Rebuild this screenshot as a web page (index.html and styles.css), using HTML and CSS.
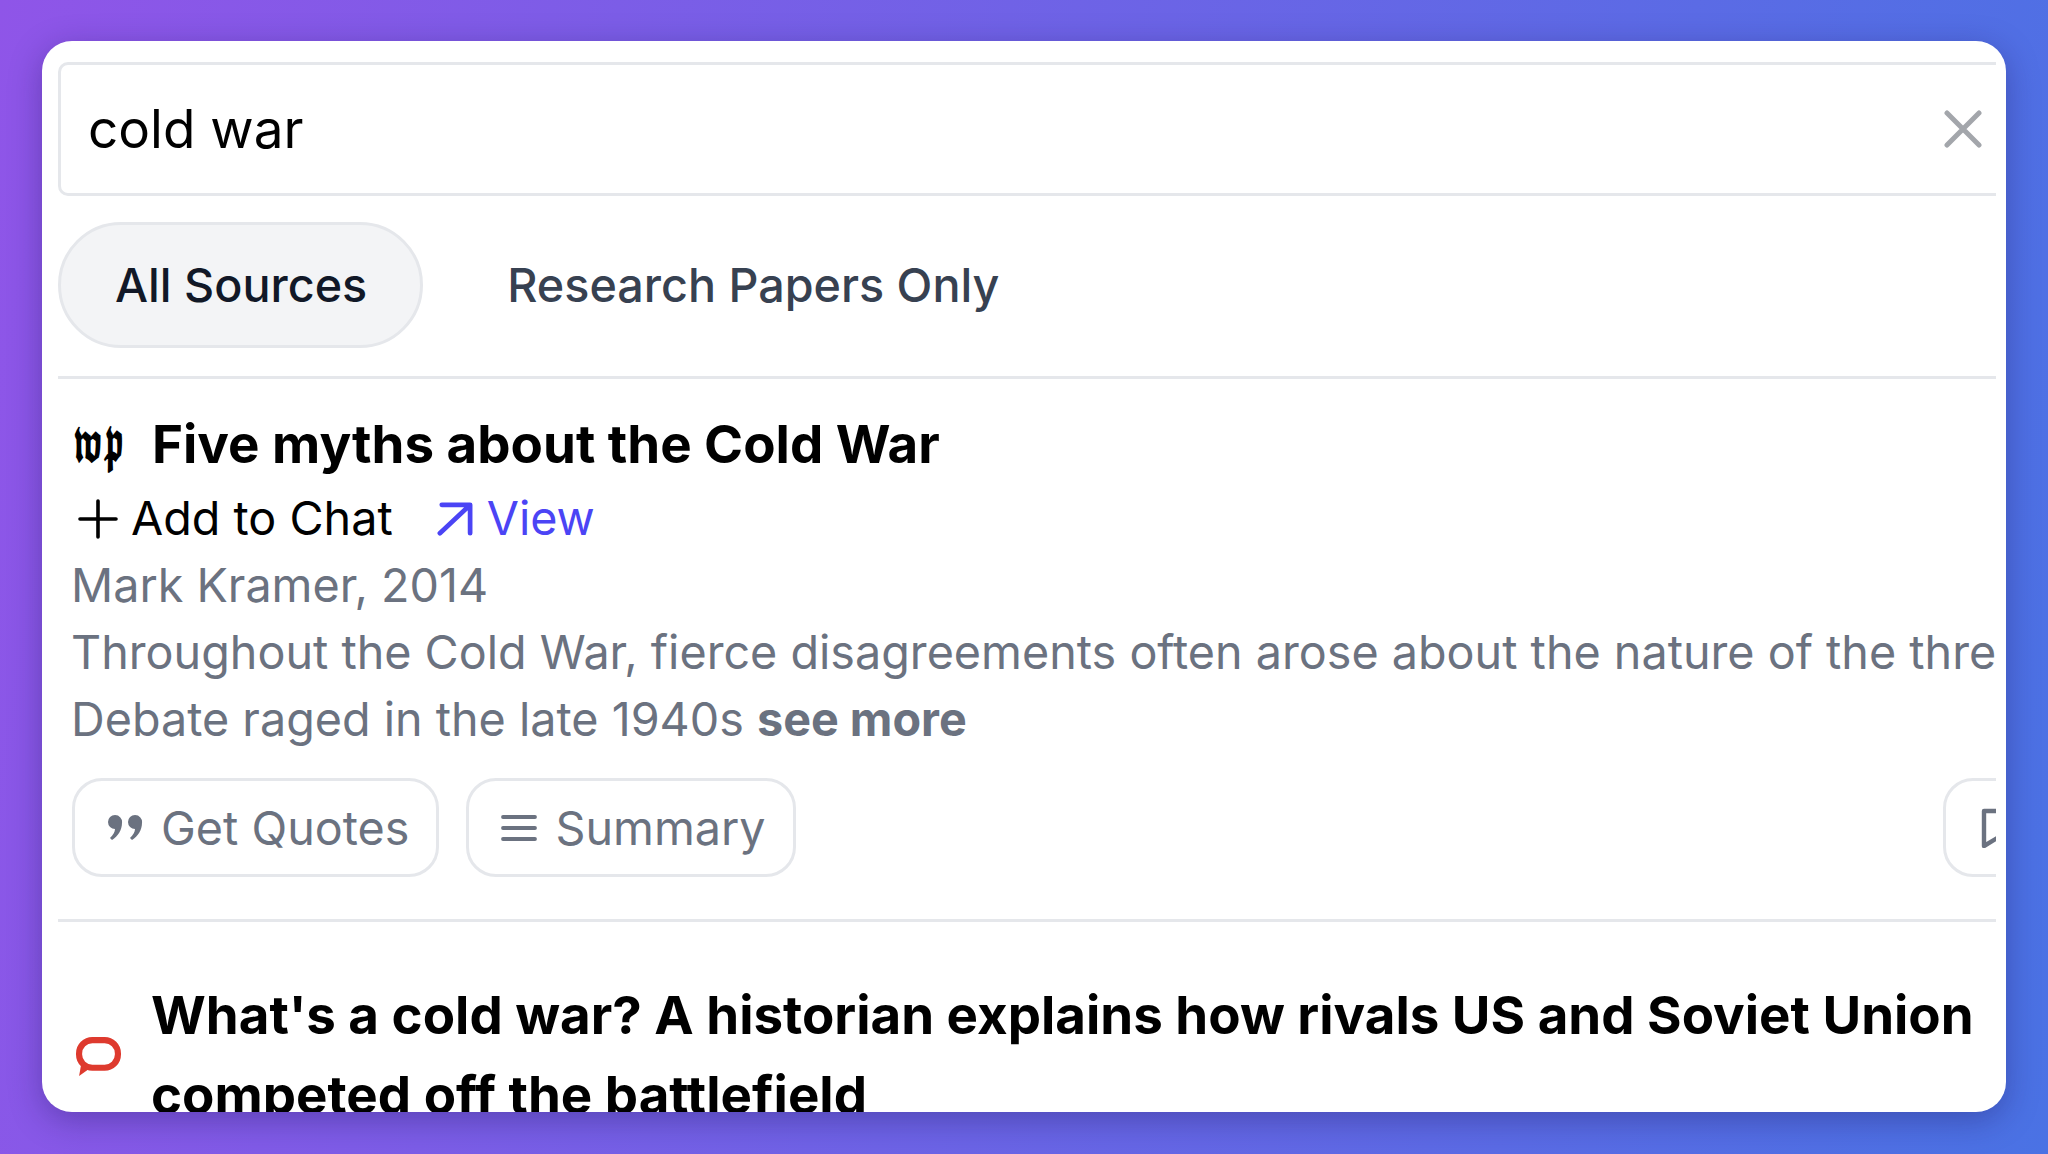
FILE: index.html
```html
<!DOCTYPE html>
<html lang="en">
  <head>
    <meta charset="UTF-8" />
    <title>cold war search</title>
    <link rel="stylesheet" href="styles.css">
  </head>
  <body>
    <main class="panel">
      <div class="panel-inner">
        <!-- search box -->
        <div class="search-box">
          <span class="search-text">cold war</span>
          <svg class="clear-icon" viewBox="0 0 38 38" fill="none" stroke="#a3a6ab" stroke-width="5" stroke-linecap="round">
            <path d="M3 3L35 35M35 3L3 35" />
          </svg>
        </div>

        <!-- source tabs -->
        <div class="tabs">
          <span class="tab tab-active">All Sources</span>
          <span class="tab">Research Papers Only</span>
        </div>

        <!-- result 1 -->
        <section class="result">
          <div class="result-head">
            <span class="logo-box"><span class="logo-wp">𝖜𝖕</span></span>
            <h2 class="result-title">Five myths about the Cold War</h2>
          </div>
          <div class="actions">
            <span class="action">
              <svg class="plus-icon" viewBox="0 0 40 40" fill="none" stroke="#000" stroke-width="3.6" stroke-linecap="round">
                <path d="M20 2V38M2 20H38" />
              </svg>
              Add to Chat
            </span>
            <span class="action action-link">
              <svg class="arrow-icon" viewBox="0 0 38 36" fill="none" stroke="#4b44f5" stroke-width="5" stroke-linecap="round" stroke-linejoin="round">
                <path d="M3 33L34 4M5 3H35V33" />
              </svg>
              View
            </span>
          </div>
          <p class="meta">Mark Kramer, 2014</p>
          <p class="meta">Throughout the Cold War, fierce disagreements often arose about the nature of the threat posed by the Soviet Union.</p>
          <p class="meta">Debate raged in the late 1940s <b>see more</b></p>
          <div class="buttons">
            <span class="btn">
              <svg class="quote-icon" viewBox="0 0 36 28" fill="#6b7280">
                <path d="M8 1a7 7 0 0 1 7 8c0 7-4 13-10 17l-2-2c3-3 5-6 5-9a7 7 0 0 1 0-14zM28 1a7 7 0 0 1 7 8c0 7-4 13-10 17l-2-2c3-3 5-6 5-9a7 7 0 0 1 0-14z" />
              </svg>
              Get Quotes
            </span>
            <span class="btn">
              <svg class="lines-icon" viewBox="0 0 36 28" fill="none" stroke="#6b7280" stroke-width="3.8" stroke-linecap="round">
                <path d="M2 3H34M2 14H34M2 25H34" />
              </svg>
              Summary
            </span>
            <span class="btn btn-more">
              <svg class="bookmark-icon" viewBox="0 0 36 40" fill="none" stroke="#6b7280" stroke-width="4.4" stroke-linejoin="round">
                <path d="M3 38V3H33V38L18 29Z" />
              </svg>
            </span>
          </div>
        </section>

        <!-- result 2 -->
        <section class="result result-second">
          <div class="result-head">
            <svg class="logo-chat" viewBox="0 0 44 38" fill="none">
              <rect x="3" y="3" width="38" height="27" rx="13" stroke="#de3a2e" stroke-width="6" />
              <path d="M5 27L3 38L13 31Z" fill="#de3a2e" />
            </svg>
            <h2 class="result-title">What's a cold war? A historian explains how rivals US and Soviet Union competed off the battlefield</h2>
          </div>
        </section>
      </div>
    </main>
  </body>
</html>
```

FILE: styles.css
```css
* {
  box-sizing: border-box;
}

html,
body {
  height: 100%;
}

body {
  margin: 0;
  padding: 41px 42px 42px;
  overflow: hidden;
  background: linear-gradient(100deg, #8f55e8 0%, #4a72e4 100%);
  font-family: Inter, "Liberation Sans", sans-serif;
}

.panel {
  height: 100%;
  padding: 21px 10px 0 16px;
  background-color: #fff;
  border-radius: 30px;
  box-shadow: 0 8px 32px rgba(30, 20, 90, 0.35);
  overflow: hidden;
}

.panel-inner {
  height: 100%;
  overflow: hidden;
}

/* search box */
.search-box {
  display: flex;
  align-items: center;
  justify-content: space-between;
  width: calc(100% + 20px);
  height: 134px;
  padding: 0 31px 0 27px;
  border: 3px solid #e5e7eb;
  border-radius: 10px;
}

.search-text {
  font-size: 53px;
  color: #000;
}

.clear-icon {
  width: 38px;
  height: 38px;
}

/* tabs */
.tabs {
  display: flex;
  gap: 20px;
  padding: 26px 0 28px;
  border-bottom: 3px solid #e5e7eb;
}

.tab {
  display: flex;
  align-items: center;
  height: 126px;
  padding: 0 54px 0 61px;
  border: 3px solid transparent;
  border-radius: 63px;
  font-size: 46.700px;
  font-weight: 500;
  color: #374151;
}

.tab-active {
  padding: 0 53px 0 54px;
  background-color: #f3f4f6;
  border-color: #e5e7eb;
  color: #111827;
}

/* results */
.result {
  padding: 25px 0 42px 13px;
  border-bottom: 3px solid #e5e7eb;
}

.result-second {
  padding-top: 53px;
  border-bottom: 0;
}

.result-head {
  display: flex;
  align-items: center;
  gap: 29px;
}

.logo-box {
  flex: none;
  width: 52px;
  height: 44px;
  padding-left: 2px;
}

.logo-wp {
  display: inline-block;
  font-family: "DejaVu Math TeX Gyre", "DejaVu Serif", "Liberation Serif", serif;
  font-size: 40px;
  font-weight: 700;
  line-height: 44px;
  color: #000;
  transform: scale(0.72, 1.3);
  transform-origin: left center;
}

.logo-chat {
  flex: none;
  width: 45px;
  height: 39px;
  margin: 2px 30px 0 5px;
}

.result-second .result-head {
  gap: 0;
}

.result-title {
  margin: 0;
  font-size: 52.850px;
  font-weight: 700;
  line-height: 80px;
  color: #000;
}

.actions {
  display: flex;
  gap: 44px;
  padding-top: 1px;
  font-size: 46.700px;
  line-height: 67px;
  color: #000;
}

.action {
  display: flex;
  align-items: center;
  gap: 13px;
}

.action-link {
  gap: 14px;
  color: #4b44f5;
}

.plus-icon {
  width: 40px;
  height: 40px;
  margin-left: 7px;
}

.arrow-icon {
  width: 36px;
  height: 34px;
}

.meta {
  margin: 0;
  font-size: 46.700px;
  line-height: 67px;
  white-space: nowrap;
  color: #6b7280;
}

.buttons {
  display: flex;
  gap: 27px;
  margin-top: 25px;
  margin-left: 1px;
  white-space: nowrap;
}

.btn {
  display: flex;
  align-items: center;
  gap: 18px;
  height: 99px;
  padding: 0 27px 0 32px;
  border: 3px solid #e5e7eb;
  border-radius: 30px;
  font-size: 46.700px;
  color: #6b7280;
}

.btn-more {
  flex: none;
  width: 120px;
  margin-left: auto;
  margin-right: -67px;
  padding-left: 35px;
}

.quote-icon {
  width: 36px;
  height: 28px;
}

.lines-icon {
  width: 36px;
  height: 28px;
}

.bookmark-icon {
  flex: none;
  width: 36px;
  height: 40px;
}

b {
  font-weight: 700;
}
```
